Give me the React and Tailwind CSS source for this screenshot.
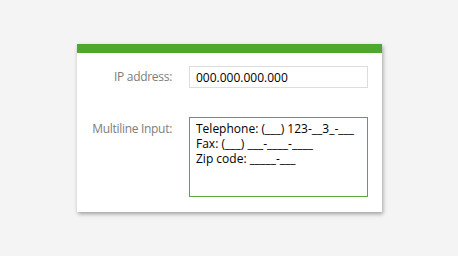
export default function App() {
  return (
    <div className="w-[458px] h-[256px] bg-[#f4f4f4] pt-[44px] pl-[77px]" style={{ fontFamily: '"Open Sans", sans-serif' }}>
      <div className="w-[305px] h-[168px] bg-white shadow-[1px_2px_4px_rgba(0,0,0,0.35)]">
        <div className="h-[9px] bg-[#4fa82e]" />
        <div className="flex flex-col gap-[29px] pt-[13px]">
          <div className="flex items-center">
            <div className="w-[95px] text-right text-[12px] tracking-[-0.3px] text-[#7d7d7d]">IP address:</div>
            <div className="ml-[17px] w-[179px] h-[22px] border border-[#dddddd] flex items-center pl-[6px] pt-[1px] text-[12px] text-black">000.000.000.000</div>
          </div>
          <div className="flex items-start">
            <div className="w-[95px] text-right text-[12px] tracking-[-0.3px] text-[#7d7d7d] pt-[3px]">Multiline Input:</div>
            <div className="ml-[17px] w-[179px] h-[80px] border border-[#5aa83a] pl-[6px] pt-[3px] text-[12px] leading-[15px] text-black whitespace-pre">
              {"Telephone: (___) 123-__3_-___\nFax: (___) ___-____-____\nZip code: _____-___"}
            </div>
          </div>
        </div>
      </div>
    </div>
  );
}
